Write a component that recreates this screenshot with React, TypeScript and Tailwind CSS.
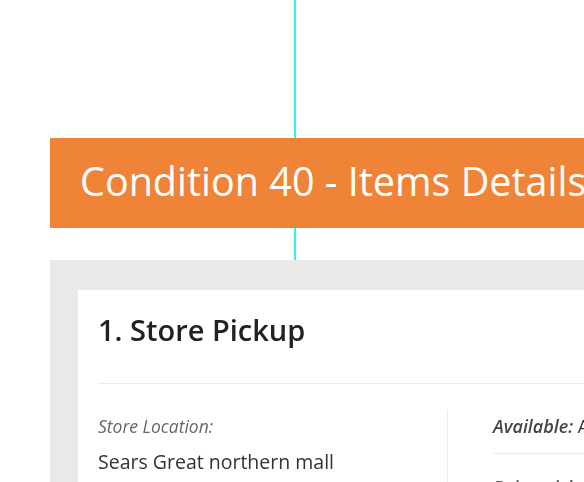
import React from 'react';

export default function App() {
  return (
    <div className="relative h-[482px] w-full overflow-hidden bg-white font-['Open_Sans',sans-serif]">
      {/* guide line */}
      <div className="absolute left-[294px] top-0 h-[260px] w-[2px] bg-[#2ef3f3]" />

      <div className="relative pt-[138px]">
        <div className="ml-[50px] flex h-[90px] w-[700px] items-center bg-[#EF8337] pb-[4px] pl-[30px]">
          <h1 className="whitespace-nowrap text-[39.5px] font-normal leading-[50px] text-white">
            Condition 40 - Items Details
          </h1>
        </div>
      </div>

      <div className="relative ml-[50px] mt-[32px] h-[300px] w-[700px] bg-[#E9E9E9] pl-[28px] pt-[30px]">
        <div className="h-full bg-white pl-[20px] text-[#333] blur-[0.4px]">
          <div className="pt-[22px] pb-[35px]">
            <h2 className="text-[29px] font-semibold leading-[36px] text-[#222]">1. Store Pickup</h2>
          </div>
          <div className="h-px bg-[#ececec]" />
          <div className="mt-[26px] flex">
            <div className="w-[350px] border-r border-[#ececec] pt-[4px]">
              <p className="text-[17.5px] italic leading-[24px] text-[#666]">Store Location:</p>
              <p className="mt-[11px] text-[19.5px] leading-[26px] text-[#333]">Sears Great northern mall</p>
            </div>
            <div className="pl-[45px] pt-[4px]">
              <p className="whitespace-nowrap text-[18px] leading-[24px] text-[#333]">
                <span className="font-semibold italic text-[#444]">Available:</span> All items
              </p>
              <div className="mt-[15px] h-px w-[200px] bg-[#ececec]" />
              <p className="mt-[21px] whitespace-nowrap text-[18px] font-semibold italic leading-[24px] text-[#555]">
                Being picked up by:
              </p>
            </div>
          </div>
        </div>
      </div>
    </div>
  );
}
